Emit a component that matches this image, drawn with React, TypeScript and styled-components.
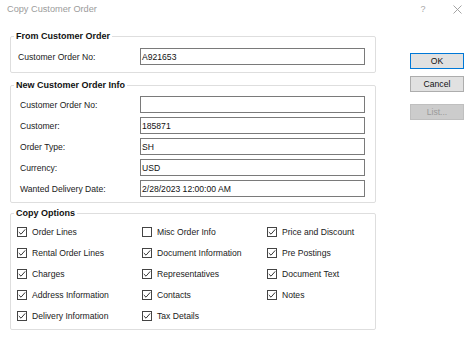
import React from 'react';
import styled, { createGlobalStyle } from 'styled-components';

const GlobalStyle = createGlobalStyle`
	html, body {
		margin: 0;
		padding: 0;
		background: #ffffff;
	}
	body {
		font-family: "Liberation Sans", Arial, sans-serif;
		color: #1a1a1a;
	}
`;

const Dialog = styled.div`
	width: 474px;
	height: 345px;
	background: #ffffff;
	overflow: hidden;
`;

const TitleBar = styled.div`
	height: 18px;
	display: flex;
	align-items: center;
	padding-left: 7px;
	font-size: 9.2px;
	color: #9c9c9c;
`;

const TitleText = styled.span`
	flex: 1;
`;

const Caption = styled.span<{ $gap: number }>`
	width: 14px;
	display: flex;
	justify-content: center;
	align-items: center;
	margin-right: ${(p) => p.$gap}px;
	color: #a8a8a8;
	font-size: 9px;
`;

const Body = styled.div`
	display: flex;
	padding: 12px 0 0 10px;
`;

const LeftColumn = styled.div`
	width: 366px;
	display: flex;
	flex-direction: column;
`;

const Group = styled.fieldset<{ $space: number }>`
	margin: ${(p) => p.$space}px 0 0 0;
	padding: 0;
	min-width: 0;
	border: 1px solid #dedede;
	border-radius: 2px;
`;

const Legend = styled.legend`
	margin-left: 3px;
	padding: 0 2px;
	font-weight: bold;
	font-size: 9px;
	line-height: 12px;
	color: #111;
`;

const Fields = styled.div<{ $top: number; $bottom: number }>`
	display: flex;
	flex-direction: column;
	gap: 4px;
	padding: ${(p) => p.$top}px 10px ${(p) => p.$bottom}px 0;
`;

const Row = styled.div`
	display: grid;
	grid-template-columns: 129px 1fr;
	align-items: center;
	height: 17px;
`;

const Label = styled.span<{ $indent: number }>`
	padding-left: ${(p) => p.$indent}px;
	font-size: 8.6px;
	color: #1a1a1a;
`;

const Input = styled.div`
	height: 15px;
	border: 1px solid #7a7a7a;
	background: #fff;
	display: flex;
	align-items: center;
	padding-left: 1px;
	font-size: 8.6px;
	color: #111;
`;

const Options = styled.div`
	display: grid;
	grid-template-columns: repeat(3, 125px);
	grid-template-rows: repeat(5, 21px);
	grid-auto-flow: column;
	padding: 2px 0 3px 6px;
`;

const Option = styled.label`
	display: flex;
	align-items: center;
	gap: 5px;
	font-size: 8.6px;
	color: #1a1a1a;
`;

const Box = styled.span`
	width: 10px;
	height: 10px;
	box-sizing: border-box;
	border: 1px solid #444;
	background: #fff;
	display: flex;
	align-items: center;
	justify-content: center;
`;

const Buttons = styled.div`
	margin-left: 34px;
	padding-top: 23px;
	display: flex;
	flex-direction: column;
`;

const Button = styled.div<{ $variant?: 'default' | 'disabled'; $top: number }>`
	width: 54px;
	height: 16px;
	box-sizing: border-box;
	margin-top: ${(p) => p.$top}px;
	display: flex;
	align-items: center;
	justify-content: center;
	font-size: 8.6px;
	background: ${(p) => (p.$variant === 'disabled' ? '#cccccc' : '#e1e1e1')};
	border: 1px solid
		${(p) => (p.$variant === 'default' ? '#0078d7' : p.$variant === 'disabled' ? '#bfbfbf' : '#adadad')};
	color: ${(p) => (p.$variant === 'disabled' ? '#9a9a9a' : '#111')};
`;

const Check: React.FC<{ on: boolean }> = ({ on }) => (
	<Box>
		{on && (
			<svg width="8" height="8" viewBox="0 0 8 8">
				<polyline points="0.8,4 3,6.2 7.2,1.4" fill="none" stroke="#333" strokeWidth="1" />
			</svg>
		)}
	</Box>
);

const options: [string, boolean][] = [
	['Order Lines', true],
	['Rental Order Lines', true],
	['Charges', true],
	['Address Information', true],
	['Delivery Information', true],
	['Misc Order Info', false],
	['Document Information', true],
	['Representatives', true],
	['Contacts', true],
	['Tax Details', true],
	['Price and Discount', true],
	['Pre Postings', true],
	['Document Text', true],
	['Notes', true],
];

const newInfo: [string, string][] = [
	['Customer Order No:', ''],
	['Customer:', '185871'],
	['Order Type:', 'SH'],
	['Currency:', 'USD'],
	['Wanted Delivery Date:', '2/28/2023 12:00:00 AM'],
];

const App: React.FC = () => {
	return (
		<Dialog>
			<GlobalStyle />
			<TitleBar>
				<TitleText>Copy Customer Order</TitleText>
				<Caption $gap={20}>?</Caption>
				<Caption $gap={10}>
					<svg width="9" height="9" viewBox="0 0 9 9">
						<path d="M0.5 0.5 L8.5 8.5 M8.5 0.5 L0.5 8.5" stroke="#9a9a9a" strokeWidth="0.9" />
					</svg>
				</Caption>
			</TitleBar>
			<Body>
				<LeftColumn>
					<Group $space={0}>
						<Legend>From Customer Order</Legend>
						<Fields $top={6} $bottom={7}>
							<Row>
								<Label $indent={7}>Customer Order No:</Label>
								<Input>A921653</Input>
							</Row>
						</Fields>
					</Group>
					<Group $space={6}>
						<Legend>New Customer Order Info</Legend>
						<Fields $top={5} $bottom={5}>
							{newInfo.map(([label, value]) => (
								<Row key={label}>
									<Label $indent={9}>{label}</Label>
									<Input>{value}</Input>
								</Row>
							))}
						</Fields>
					</Group>
					<Group $space={4}>
						<Legend>Copy Options</Legend>
						<Options>
							{options.map(([label, on]) => (
								<Option key={label}>
									<Check on={on} />
									{label}
								</Option>
							))}
						</Options>
					</Group>
				</LeftColumn>
				<Buttons>
					<Button $variant="default" $top={0}>OK</Button>
					<Button $top={7}>Cancel</Button>
					<Button $variant="disabled" $top={12}>List...</Button>
				</Buttons>
			</Body>
		</Dialog>
	);
};

export default App;
